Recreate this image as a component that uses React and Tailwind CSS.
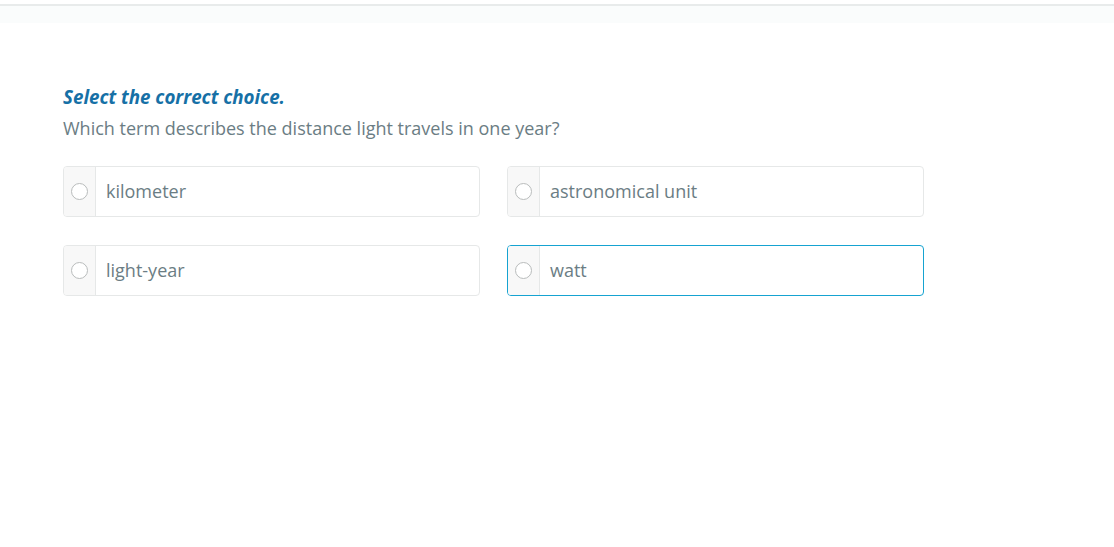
import React from 'react'

const choices = ['kilometer', 'astronomical unit', 'light-year', 'watt']

function Choice({ label, active }) {
  return (
    <label
      className={`flex h-[51px] cursor-pointer overflow-hidden rounded-[4px] border bg-white ${
        active ? 'border-[#16a3d1]' : 'border-[#e6e8e8]'
      }`}
    >
      <span className="flex w-[32px] shrink-0 items-center justify-center border-r border-[#e6e8e8] bg-[#f8f8f8]">
        <span className="h-[17px] w-[17px] rounded-full border border-[#b9bcbc] bg-white" />
      </span>
      <span className="flex items-center pl-[10px] text-[18px] text-[#6b7d84]">{label}</span>
    </label>
  )
}

export default function App() {
  return (
    <div className="min-h-[547px] bg-white" style={{ fontFamily: '"Open Sans", sans-serif' }}>
      <div className="mt-[4px] h-[2px] bg-[#e8ebeb]" />
      <div className="h-[17px] bg-[#fafcfc]" />

      <div className="px-[63px] pt-[62px]">
        <h2 className="text-[18.75px] font-bold italic leading-[24px] text-[#1670a6]">Select the correct choice.</h2>
        <p className="mt-[7px] text-[18px] leading-[24px] text-[#6b7d84]">
          Which term describes the distance light travels in one year?
        </p>

        <div className="mt-[26px] grid w-[861px] grid-cols-2 gap-x-[27px] gap-y-[28px]">
          {choices.map((c, i) => (
            <Choice key={c} label={c} active={i === 3} />
          ))}
        </div>
      </div>
    </div>
  )
}
